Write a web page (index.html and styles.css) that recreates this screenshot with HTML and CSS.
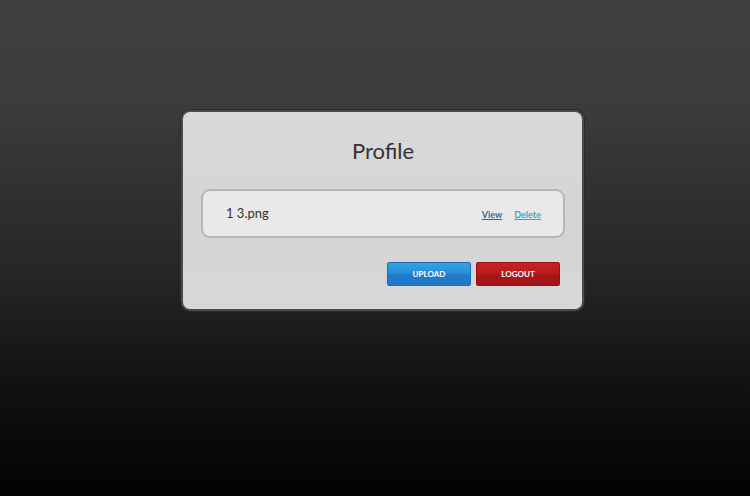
FILE: index.html
```html
<!DOCTYPE html>
<html lang="en">
<head>
<meta charset="utf-8">
<title>Profile</title>
<link rel="stylesheet" href="styles.css">
</head>
<body>
<main class="card">
  <h1 class="title">Profile</h1>
  <div class="file-row">
    <span class="file-name">1 3.png</span>
    <div class="file-actions">
      <a href="#" class="link link-view">View</a>
      <a href="#" class="link link-delete">Delete</a>
    </div>
  </div>
  <div class="actions">
    <button class="btn btn-upload">UPLOAD</button>
    <button class="btn btn-logout">LOGOUT</button>
  </div>
</main>
</body>
</html>
```

FILE: styles.css
```css
html, body {
  height: 100%;
}
body {
  margin: 0;
  padding: 110px 0 0 15px;
  box-sizing: border-box;
  background: linear-gradient(#404040 0%, #3b3b3b 22%, #262626 55%, #111111 78%, #020202 100%);
  font-family: Lato, "Open Sans", "Liberation Sans", sans-serif;
}
.card {
  margin: 0 auto;
  box-sizing: content-box;
  border: 2px solid #4b4b4b;
  border-radius: 9px;
  background: linear-gradient(#d9d9d9, #d4d4d4 60%, #d8d8d8);
  padding: 0 17px 23px 18px;
  width: 364px;
  box-shadow: 0 0 0 1px #2a2a2a;
}
.title {
  margin: 0;
  padding-top: 24px;
  font-size: 22px;
  line-height: 30px;
  font-weight: 400;
  color: #333;
  text-align: center;
}
.file-row {
  margin-top: 23px;
  height: 45px;
  border: 2px solid #b6b6b6;
  border-radius: 9px;
  background: #e9e9e9;
  display: flex;
  align-items: center;
  justify-content: space-between;
  padding: 0 22px 0 23px;
}
.file-name {
  font-size: 13px;
  color: #333;
  margin-top: -2px;
}
.file-actions {
  display: flex;
  gap: 12px;
  margin-top: 2px;
}
.link {
  font-size: 9px;
  font-weight: 700;
  text-decoration: underline;
}
.link-view {
  color: #2b6e9c;
}
.link-delete {
  color: #36a7cc;
}
.actions {
  margin-top: 24px;
  display: flex;
  justify-content: flex-end;
  gap: 5px;
  padding-right: 5px;
}
.btn {
  width: 84px;
  height: 24px;
  border-radius: 2px;
  font-family: Lato, "Open Sans", sans-serif;
  font-size: 8px;
  font-weight: 700;
  color: #fff;
  padding: 0;
  cursor: pointer;
}
.btn-upload {
  border: 1px solid #1c6db3;
  background: linear-gradient(#33a3e3 0%, #2a8fd8 45%, #2079c9 55%, #1f78c8 100%);
}
.btn-logout {
  border: 1px solid #8f1115;
  background: linear-gradient(#c92024 0%, #bd1b1f 45%, #a81519 55%, #a01418 100%);
}
```
